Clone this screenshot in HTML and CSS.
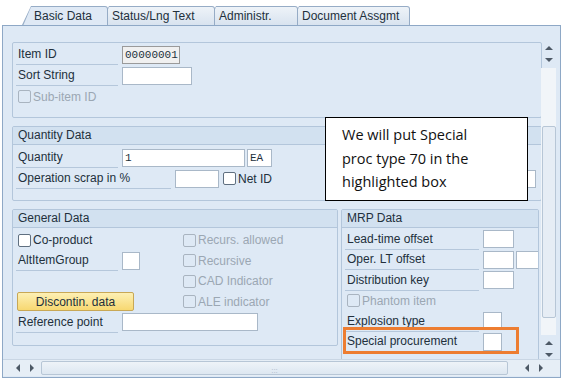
FILE: index.html
```html
<!DOCTYPE html>
<html lang="en">
<head>
    <meta charset="UTF-8">
    <title>BOM Item - Basic Data</title>
    <link rel="stylesheet" href="styles.css">
</head>
<body>
<div class="screen">
    <div class="tabs">
        <div class="tab active"><span class="tab-in">Basic Data</span></div>
        <div class="tab"><span class="tab-in">Status/Lng Text</span></div>
        <div class="tab"><span class="tab-in">Administr.</span></div>
        <div class="tab"><span class="tab-in">Document Assgmt</span></div>
    </div>

    <div class="panel">
        <div class="content">
            <!-- item -->
            <div class="group g-item">
                <div class="row">
                    <span class="lbl">Item ID</span>
                    <span class="inp ro mono w58">00000001</span>
                </div>
                <div class="row">
                    <span class="lbl">Sort String</span>
                    <span class="inp w70"></span>
                </div>
                <div class="row">
                    <span class="chk off"><i></i>Sub-item ID</span>
                </div>
            </div>

            <!-- quantity -->
            <div class="group g-qty">
                <div class="ghead">Quantity Data</div>
                <div class="row">
                    <span class="lbl">Quantity</span>
                    <span class="inp mono w123">1</span>
                    <span class="inp mono w25">EA</span>
                </div>
                <div class="row">
                    <span class="lbl lbl-wide">Operation scrap in %</span>
                    <span class="inp w44"></span>
                    <span class="chk"><i></i>Net ID</span>
                    <span class="inp w60 push"></span>
                </div>
            </div>

            <div class="cols">
                <div class="group g-gen">
                    <div class="ghead">General Data</div>
                    <div class="gen-grid">
                        <span class="chk"><i></i>Co-product</span>
                        <span class="chk off"><i></i>Recurs. allowed</span>

                        <div class="row">
                            <span class="lbl">AltItemGroup</span>
                            <span class="inp w18"></span>
                        </div>
                        <span class="chk off"><i></i>Recursive</span>

                        <span></span>
                        <span class="chk off"><i></i>CAD Indicator</span>

                        <div><button class="btn">Discontin. data</button></div>
                        <span class="chk off"><i></i>ALE indicator</span>

                        <div class="row span2">
                            <span class="lbl">Reference point</span>
                            <span class="inp w136"></span>
                        </div>
                    </div>
                </div>

                <div class="group g-mrp">
                    <div class="ghead">MRP Data</div>
                    <div class="row">
                        <span class="lbl lbl-mrp">Lead-time offset</span>
                        <span class="inp w31"></span>
                    </div>
                    <div class="row">
                        <span class="lbl lbl-mrp">Oper. LT offset</span>
                        <span class="inp w31"></span>
                        <span class="inp w31"></span>
                    </div>
                    <div class="row">
                        <span class="lbl lbl-mrp">Distribution key</span>
                        <span class="inp w31"></span>
                    </div>
                    <div class="row">
                        <span class="chk off"><i></i>Phantom item</span>
                    </div>
                    <div class="row">
                        <span class="lbl lbl-mrp">Explosion type</span>
                        <span class="inp w19"></span>
                    </div>
                    <div class="row">
                        <span class="lbl lbl-mrp">Special procurement</span>
                        <span class="inp w19"></span>
                    </div>
                </div>
            </div>
        </div>

        <!-- vertical scrollbar -->
        <div class="vscroll">
            <span class="arr up"></span>
            <span class="arr down"></span>
            <div class="vtrack"><div class="vthumb"></div></div>
            <span class="arr up"></span>
            <span class="arr down"></span>
        </div>

        <!-- horizontal scrollbar -->
        <div class="hscroll">
            <span class="arr left"></span>
            <span class="arr right"></span>
            <div class="hthumb"><span class="grip">:::</span></div>
            <span class="arr left"></span>
            <span class="arr right"></span>
        </div>
    </div>

    <!-- annotation overlays -->
    <div class="callout">We will put Special proc type 70 in the highlighted box</div>
    <div class="highlight"></div>
</div>
</body>
</html>
```

FILE: styles.css
```css
body {
    margin: 0;
    background: #fff;
    font-family: "Liberation Sans", Arial, sans-serif;
    font-size: 12px;
    color: #22303c;
}

.screen {
    position: relative;
    width: 564px;
    height: 384px;
    padding-top: 6px;
    box-sizing: border-box;
}

/* tabs */
.tabs {
    display: flex;
    padding-left: 22px;
    height: 19px;
}

.tab {
    background: #96acc6;
    clip-path: polygon(9px 0, 100% 0, 100% 100%, 0 100%);
    border-top-right-radius: 3px;
    margin-right: -8px;
    display: flex;
}

.tab-in {
    flex: 1;
    display: block;
    margin: 1px 1px 0 1px;
    padding: 2px 0 0 11px;
    background: linear-gradient(#eef3f8, #d8e3ef);
    clip-path: polygon(8px 0, 100% 0, 100% 100%, 0 100%);
    border-top-right-radius: 2px;
    line-height: 15px;
    white-space: nowrap;
}

.tab:nth-child(1) { width: 86px; z-index: 4; }
.tab:nth-child(2) { width: 115px; z-index: 3; }
.tab:nth-child(3) { width: 91px; z-index: 2; }
.tab:nth-child(4) { width: 120px; z-index: 1; }

.tab.active .tab-in {
    background: #dfe9f5;
    margin-bottom: -1px;
}

/* main panel */
.panel {
    margin: 0 3px 0 2px;
    height: 353px;
    border: 1px solid #8ea8c6;
    background: #dee9f5;
    display: grid;
    grid-template-columns: 1fr 16px;
    grid-template-rows: 1fr 16px;
    box-sizing: border-box;
}

.content {
    padding: 16px 2px 0 9px;
    overflow: hidden;
}

.group {
    border: 1px solid #b3c6db;
    border-radius: 2px;
    margin-bottom: 8px;
    padding: 0 3px;
    box-sizing: border-box;
    overflow: hidden;
}

.g-item {
    height: 76px;
    padding-top: 1px;
}

.g-qty {
    height: 75px;
}

.ghead {
    margin: 0 -3px 2px;
    height: 17px;
    line-height: 17px;
    padding-left: 5px;
    background: #d2e1f0;
    border-bottom: 1px solid #b3c6db;
}

.row {
    display: flex;
    align-items: center;
    height: 21px;
}

.lbl {
    flex-shrink: 0;
    width: 102px;
    margin-right: 4px;
    padding-left: 2px;
    line-height: 20px;
    border-bottom: 1px solid #b5c7db;
    box-sizing: border-box;
    white-space: nowrap;
}

.lbl-wide { width: 155px; }
.lbl-mrp { width: 134px; }

.inp {
    flex-shrink: 0;
    height: 18px;
    background: #fff;
    border: 1px solid #a9b8c8;
    box-sizing: border-box;
    margin-right: 2px;
    padding: 0 2px;
    line-height: 16px;
}

.inp.ro {
    background: #f0f0f0;
    border-color: #9a9a9a;
}

.mono {
    font-family: "Liberation Mono", "Courier New", monospace;
    font-size: 11px;
}

.w18 { width: 18px; }
.w19 { width: 19px; }
.w25 { width: 25px; }
.w31 { width: 31px; }
.w44 { width: 44px; }
.w58 { width: 58px; }
.w60 { width: 60px; }
.w70 { width: 70px; }
.w123 { width: 123px; }
.w136 { width: 136px; }

.push { margin-left: auto; }

/* checkboxes */
.chk {
    display: flex;
    align-items: center;
    padding-left: 2px;
    white-space: nowrap;
}

.chk i {
    width: 11px;
    height: 11px;
    background: #fff;
    border: 1px solid #5f6f80;
    border-radius: 2px;
    margin-right: 2px;
}

.chk.off {
    color: #9ba7b3;
}

.chk.off i {
    background: transparent;
    border-color: #a9b4c0;
}

/* general / mrp columns */
.cols {
    display: flex;
    gap: 3px;
    align-items: flex-start;
}

.g-gen {
    width: 326px;
    height: 137px;
}

.g-mrp {
    width: 198px;
    height: 160px;
}

.g-mrp .ghead {
    margin-bottom: 1px;
}

.g-mrp .row {
    height: 20.5px;
}

.gen-grid {
    display: grid;
    grid-template-columns: 165px 1fr;
    grid-auto-rows: 20.5px;
    align-items: center;
}

.span2 { grid-column: span 2; }

.btn {
    width: 117px;
    height: 19px;
    margin-left: 1px;
    font: inherit;
    color: #22303c;
    background: linear-gradient(#fdf0b4, #f7d871);
    border: 1px solid #c8a856;
    border-radius: 2px;
    padding: 0;
}

/* scrollbars */
.vscroll {
    grid-row: 1;
    grid-column: 2;
    display: flex;
    flex-direction: column;
    align-items: center;
    padding-top: 16px;
    margin-left: -3px;
    margin-right: 4px;
}

.arr {
    width: 0;
    height: 0;
    border: 4px solid transparent;
    margin: 4px 0;
}

.arr.up { border-bottom: 4px solid #4d5966; border-top-width: 0; }
.arr.down { border-top: 4px solid #4d5966; border-bottom-width: 0; }
.arr.left { border-right: 4px solid #4d5966; border-left-width: 0; margin: 0 5px; }
.arr.right { border-left: 4px solid #4d5966; border-right-width: 0; margin: 0 5px; }

.vtrack {
    flex: 1;
    width: 15px;
    background: #f1f5f9;
    display: flex;
    flex-direction: column;
    justify-content: center;
    margin: 2px 0;
}

.vthumb {
    margin-top: 40px;
    height: 190px;
    margin-left: 1px;
    width: 12px;
    border: 1px solid #b7c6d6;
    border-radius: 2px;
    background: #e6edf5;
}

.hscroll {
    grid-row: 2;
    grid-column: 1 / span 2;
    display: flex;
    align-items: center;
    padding-left: 8px;
    margin-top: -2px;
    height: 16px;
    border-top: 1px solid #c9d6e4;
    background: #e6eef6;
}

.hthumb {
    width: 465px;
    height: 12px;
    margin: 0 12px 0 2px;
    border: 1px solid #b7c6d6;
    border-radius: 2px;
    background: linear-gradient(#eef3f8, #dde7f1);
    text-align: center;
}

.grip {
    font-size: 8px;
    line-height: 11px;
    color: #a9b7c6;
}

/* annotations */
.callout {
    position: absolute;
    left: 325px;
    top: 117px;
    width: 203px;
    height: 84px;
    box-sizing: border-box;
    border: 1.5px solid #000;
    background: #fff;
    padding: 5px 40px 0 16px;
    font-family: "Open Sans", "Liberation Sans", sans-serif;
    font-size: 14.5px;
    line-height: 23.5px;
    color: #111;
}

.highlight {
    position: absolute;
    left: 343px;
    top: 327px;
    width: 176px;
    height: 27px;
    box-sizing: border-box;
    border: 3px solid #ed7d31;
}
```
